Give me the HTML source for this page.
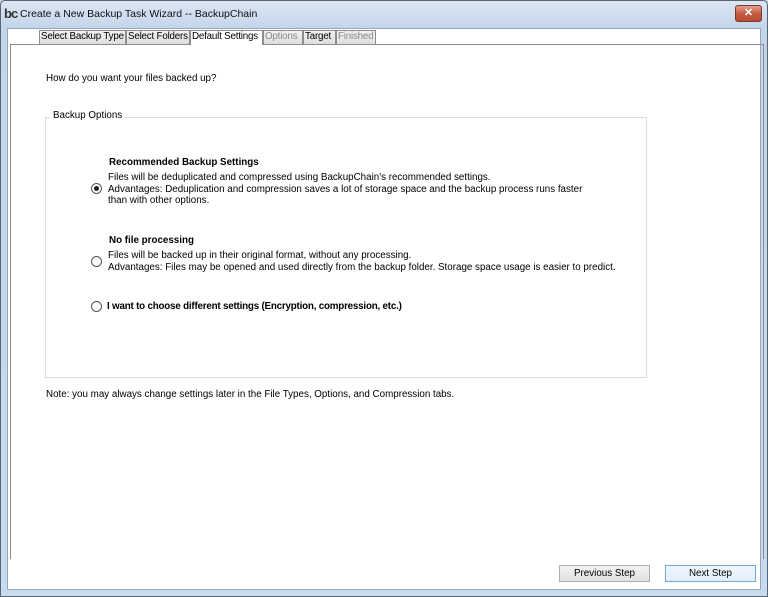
<!DOCTYPE html>
<html><head><meta charset="utf-8"><style>
*{margin:0;padding:0;box-sizing:border-box}
body{width:768px;height:597px;overflow:hidden;background:#c3d6ec;font-family:"Liberation Sans",sans-serif;font-size:9.8px;color:#000;position:relative}
.a{position:absolute;white-space:nowrap}
.frame{position:absolute;left:0;top:0;width:768px;height:597px;border:1px solid #5a6470;border-radius:5px 5px 0 0;background:linear-gradient(#dbe6f3,#c3d5eb 28px,#c9dbef)}
.client{position:absolute;left:7px;top:28px;width:754px;height:562px;background:#fff;border:1px solid #98a8bc}
.tab{position:absolute;top:30px;height:14px;border:1px solid #8c8c8c;border-bottom:none;background:linear-gradient(#f2f2f2,#dedede);font-size:9.8px;line-height:12px;padding:0 1px;white-space:nowrap;overflow:hidden;letter-spacing:-0.2px}
.dis{color:#8a8a8a}
.btn{position:absolute;top:565px;height:17px;width:91px;border:1px solid #adadad;background:linear-gradient(#f2f2f2,#e1e1e1);text-align:center;line-height:15px;font-size:9.8px}
.radio{position:absolute;width:11px;height:11px;border:1px solid #555;border-radius:50%;background:#fff}
</style></head><body>
<div class="frame"></div>
<div class="a" style="left:4px;top:6px;font-weight:bold;font-size:13px;color:#333;letter-spacing:-1px">bc</div>
<div class="a" style="left:20px;top:8px;font-size:10.5px;color:#111">Create a New Backup Task Wizard -- BackupChain</div>
<div class="a" style="left:735px;top:5px;width:27px;height:17px;border:1px solid #7a3a2a;border-radius:3px;background:linear-gradient(#e0a090,#c65a42 50%,#b84a32);color:#fff;font-weight:bold;text-align:center;line-height:15px;font-size:11px">✕</div>
<div class="client"></div>
<div class="a" style="left:10px;top:44px;width:754px;height:515px;border-top:1px solid #8c8c8c;border-left:1px solid #8c8c8c;border-right:1px solid #8c8c8c"></div>
<div class="tab" style="left:39px;width:87px">Select Backup Type</div>
<div class="tab" style="left:126px;width:64px">Select Folders</div>
<div class="tab" style="left:190px;width:73px;background:#fff;height:15px">Default Settings</div>
<div class="tab dis" style="left:263px;width:40px">Options</div>
<div class="tab" style="left:303px;width:33px">Target</div>
<div class="tab dis" style="left:336px;width:40px">Finished</div>
<div class="a" style="left:46px;top:73px">How do you want your files backed up?</div>
<div class="a" style="left:45px;top:117px;width:602px;height:261px;border:1px solid #dcdcdc"></div>
<div class="a" style="left:50px;top:110px;background:#fff;padding:0 3px">Backup Options</div>
<div class="a" style="left:109px;top:157px;font-weight:bold">Recommended Backup Settings</div>
<div class="a" style="left:108px;top:172px;line-height:11.5px">Files will be deduplicated and compressed using BackupChain's recommended settings.<br>Advantages: Deduplication and compression saves a lot of storage space and the backup process runs faster<br>than with other options.</div>
<div class="radio" style="left:91px;top:183px"><div style="position:absolute;left:2px;top:2px;width:5px;height:5px;border-radius:50%;background:#222"></div></div>
<div class="a" style="left:109px;top:235px;font-weight:bold">No file processing</div>
<div class="a" style="left:108px;top:250px;line-height:11.5px">Files will be backed up in their original format, without any processing.<br>Advantages: Files may be opened and used directly from the backup folder. Storage space usage is easier to predict.</div>
<div class="radio" style="left:91px;top:256px"></div>
<div class="radio" style="left:91px;top:301px"></div>
<div class="a" style="left:107px;top:301px;font-weight:bold;letter-spacing:-0.2px">I want to choose different settings (Encryption, compression, etc.)</div>
<div class="a" style="left:46px;top:389px">Note: you may always change settings later in the File Types, Options, and Compression tabs.</div>
<div class="btn" style="left:559px">Previous Step</div>
<div class="btn" style="left:665px;border-color:#6fa9dc;background:linear-gradient(#f0f6fc,#e2eefa)">Next Step</div>
</body></html>
